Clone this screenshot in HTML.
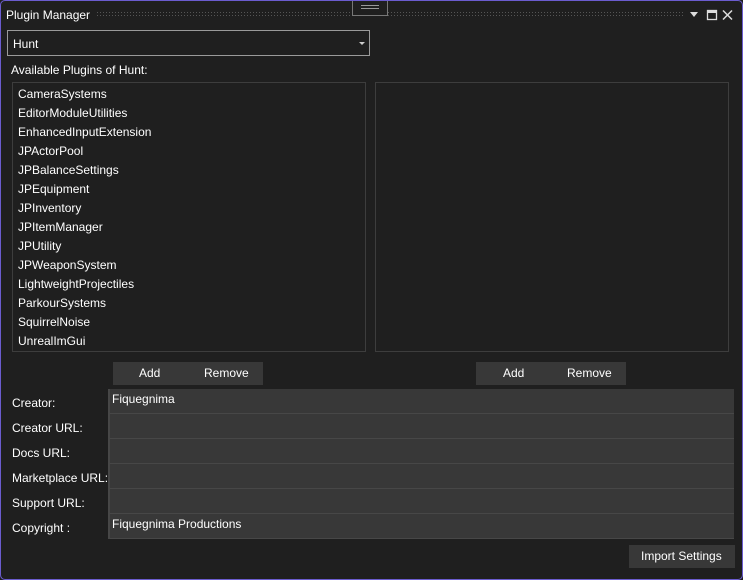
<!DOCTYPE html>
<html><head><style>
*{margin:0;padding:0;box-sizing:border-box}
html,body{width:743px;height:580px;background:#1f1f1f;overflow:hidden}
body{font-family:"Liberation Sans",sans-serif;font-size:12px;color:#fff;position:relative}
.win{position:absolute;left:0;top:0;width:743px;height:580px;border:1px solid #6b5ccf;border-radius:5px}
.a{position:absolute}
.dots{position:absolute;left:96px;top:11px;width:588px;height:6px;background-image:radial-gradient(#555 0.6px,transparent 0.7px);background-size:3px 3px}
.list{position:absolute;border:1px solid #3d3d3d;background:#1f1f1f}
.list div{height:19px;line-height:19px;padding-left:5px;font-size:12px}
.btns{position:absolute;background:#383838;height:23px;width:150px}
.btns span{position:absolute;top:4px}
.lbl{position:absolute;left:12px}
.fld{position:absolute;left:109px;width:625px;height:24px;background:#383838;border-left:1px solid #464646}
.fld span{position:absolute;left:2px;top:3px}
</style></head><body>
<div class="win"></div>
<div class="a" style="left:6px;top:8px">Plugin Manager</div>
<div class="dots"></div>
<div class="a" style="left:352px;top:1px;width:36px;height:15px;border:1px solid #777;border-top:none;background:#1f1f1f"><div class="a" style="left:8px;top:4px;width:18px;height:4px;border-top:1px solid #999;border-bottom:1px solid #999"></div></div>
<svg class="a" style="left:688px;top:9px" width="50" height="12"><path d="M2 3h8l-4 5z" fill="#ddd"/><rect x="19.5" y="1.5" width="9" height="9" fill="none" stroke="#ddd" stroke-width="1.3"/><rect x="19.5" y="1.5" width="9" height="2.5" fill="#ddd"/><path d="M35 1.5l9 9M44 1.5l-9 9" stroke="#ddd" stroke-width="1.5"/></svg>
<div class="a" style="left:7px;top:30px;width:363px;height:26px;border:1px solid #9a9a9a"><span class="a" style="left:5px;top:6px">Hunt</span><svg class="a" style="left:351px;top:11px" width="6" height="4"><path d="M0 0h6l-3 3z" fill="#ccc"/></svg></div>
<div class="a" style="left:11px;top:63px">Available Plugins of Hunt:</div>
<div class="list" style="left:12px;top:82px;width:354px;height:270px;padding-top:2px">
<div>CameraSystems</div><div>EditorModuleUtilities</div><div>EnhancedInputExtension</div><div>JPActorPool</div><div>JPBalanceSettings</div><div>JPEquipment</div><div>JPInventory</div><div>JPItemManager</div><div>JPUtility</div><div>JPWeaponSystem</div><div>LightweightProjectiles</div><div>ParkourSystems</div><div>SquirrelNoise</div><div>UnrealImGui</div>
</div>
<div class="list" style="left:375px;top:82px;width:354px;height:270px"></div>
<div class="btns" style="left:113px;top:362px"><span style="left:26px">Add</span><span style="left:91px">Remove</span></div>
<div class="btns" style="left:476px;top:362px"><span style="left:27px">Add</span><span style="left:91px">Remove</span></div>
<div class="a" style="left:108px;top:389px;width:626px;height:150px;background:#474747"></div>
<div class="fld" style="top:389px"><span>Fiquegnima</span></div>
<div class="fld" style="top:414px"></div>
<div class="fld" style="top:439px"></div>
<div class="fld" style="top:464px"></div>
<div class="fld" style="top:489px"></div>
<div class="fld" style="top:514px"><span>Fiquegnima Productions</span></div>
<div class="lbl" style="top:396px">Creator:</div>
<div class="lbl" style="top:421px">Creator URL:</div>
<div class="lbl" style="top:446px">Docs URL:</div>
<div class="lbl" style="top:471px">Marketplace URL:</div>
<div class="lbl" style="top:496px">Support URL:</div>
<div class="lbl" style="top:521px">Copyright :</div>
<div class="a" style="left:629px;top:545px;width:106px;height:23px;background:#383838"><span class="a" style="left:12px;top:4px">Import Settings</span></div>
</body></html>
